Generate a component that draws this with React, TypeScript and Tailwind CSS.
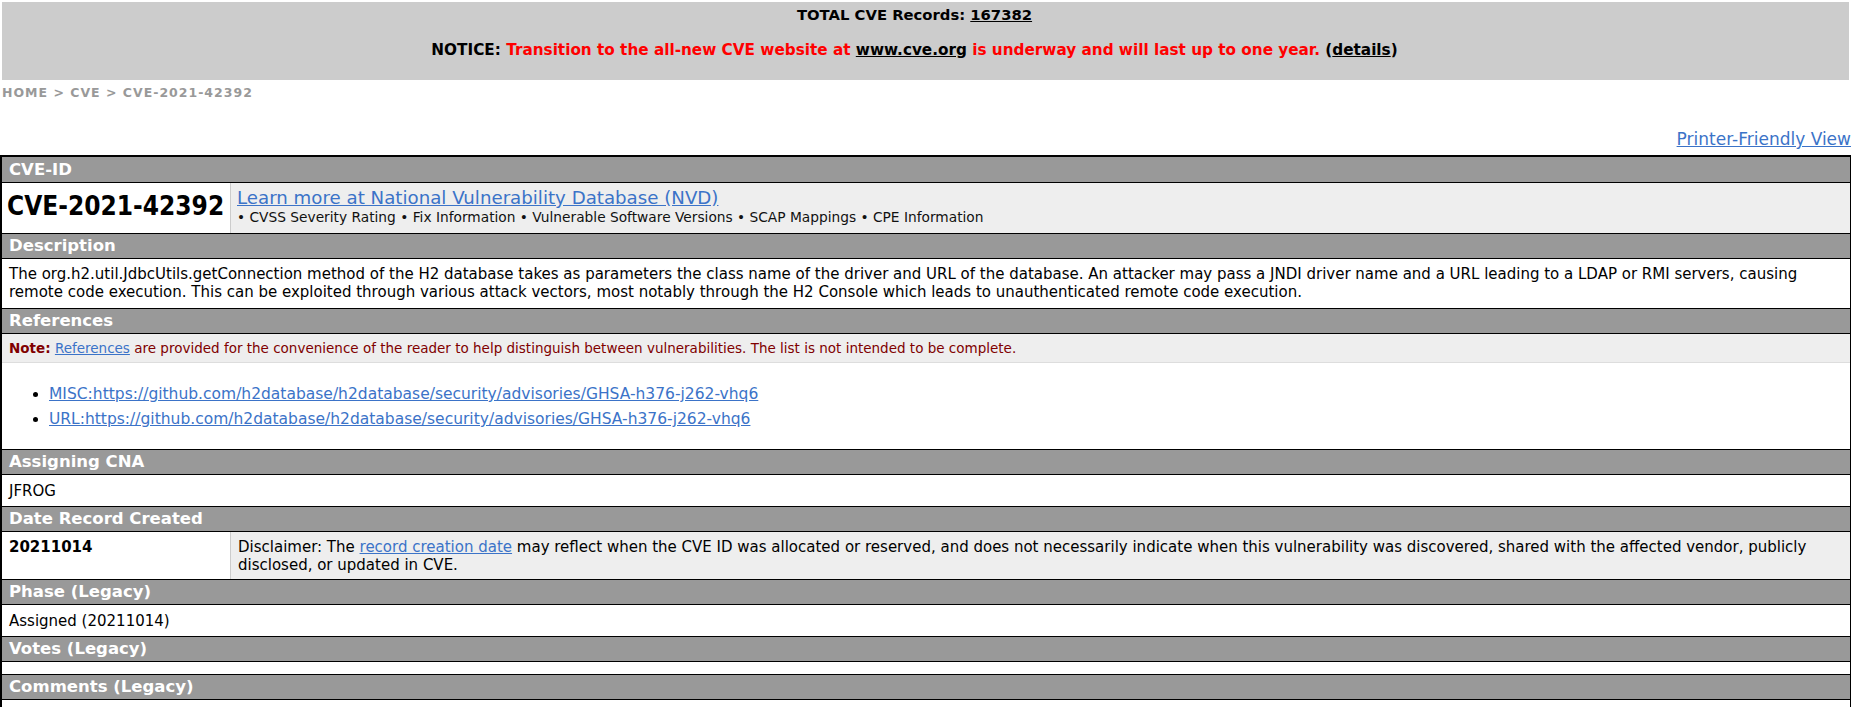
import React from "react";

const F = { fontFamily: '"DejaVu Sans", Verdana, sans-serif' };
const FC = { fontFamily: '"DejaVu Sans Condensed", "DejaVu Sans", sans-serif' };

function Header({ children, first }: { children: React.ReactNode; first?: boolean }) {
  return (
    <div
      className={
        "h-[26px] flex items-center bg-[#999999] px-[7px] text-[16.5px] font-bold text-white border-b border-black " +
        (first ? "" : "border-t")
      }
    >
      {children}
    </div>
  );
}

const linkCls = "text-[#3b73c8] underline";

export default function App() {
  return (
    <div style={F} className="w-[1875px] h-[707px] overflow-hidden bg-white text-black">
      <div className="w-[1851px]">
        {/* Banner */}
        <div className="mx-[2px] mt-[2px] h-[78px] bg-[#cccccc] pr-[22px] flex flex-col items-center text-[15.25px] font-bold leading-[18px]">
          <div className="mt-[4px] text-[14.8px]">
            TOTAL CVE Records: <span className="underline">167382</span>
          </div>
          <div className="mt-[17px]">
            NOTICE: <span className="text-[#ff0000]">Transition to the all-new CVE website at </span>
            <span className="underline">www.cve.org</span>
            <span className="text-[#ff0000]"> is underway and will last up to one year.</span> (
            <span className="underline">details</span>)
          </div>
        </div>

        {/* Breadcrumb */}
        <div className="px-[2px] mt-[5px] text-[12.5px] font-bold tracking-[1px] text-[#999999] leading-[16px]">
          HOME &gt; CVE &gt; CVE-2021-42392
        </div>

        {/* Printer friendly */}
        <div className="flex justify-end mt-[27px] h-[24px]">
          <span className={"text-[17px] leading-[22px] " + linkCls}>Printer-Friendly View</span>
        </div>

        {/* Table */}
        <div className="mt-[3px] border-t-2 border-l-2 border-r border-black text-[15px] leading-[18px]">
          <Header first>CVE-ID</Header>
          <div className="grid grid-cols-[228px_1fr] h-[50px]">
            <div
              style={FC}
              className="bg-white px-[5px] flex items-center pb-[4px] text-[26px] font-bold whitespace-nowrap"
            >
              CVE-2021-42392
            </div>
            <div className="bg-[#eeeeee] border-l border-[#cccccc] px-[6px] pt-[4px]">
              <div className={"text-[18.2px] leading-[22px] " + linkCls}>
                Learn more at National Vulnerability Database (NVD)
              </div>
              <div className="text-[13.75px] leading-[17px] text-[#111]">
                • CVSS Severity Rating • Fix Information • Vulnerable Software Versions • SCAP Mappings • CPE
                Information
              </div>
            </div>
          </div>
          <Header>Description</Header>
          <div className="px-[7px] pt-[6px] pb-[7px]">
            The org.h2.util.JdbcUtils.getConnection method of the H2 database takes as parameters the class name of
            the driver and URL of the database. An attacker may pass a JNDI driver name and a URL leading to a LDAP or
            RMI servers, causing remote code execution. This can be exploited through various attack vectors, most
            notably through the H2 Console which leads to unauthenticated remote code execution.
          </div>
          <Header>References</Header>
          <div className="h-[29px] bg-[#eeeeee] border-b border-[#dddddd] px-[7px] flex items-center text-[13.5px] text-[#800000]">
            <span>
              <b>Note:</b> <span className={linkCls}>References</span> are provided for the convenience of the reader
              to help distinguish between vulnerabilities. The list is not intended to be complete.
            </span>
          </div>
          <div className="h-[86px] pt-[22px]">
            <ul className="list-disc pl-[47px] flex flex-col gap-[7px] text-[15.5px] leading-[18px]">
              <li>
                <span className={linkCls}>
                  MISC:https://github.com/h2database/h2database/security/advisories/GHSA-h376-j262-vhq6
                </span>
              </li>
              <li>
                <span className={linkCls}>
                  URL:https://github.com/h2database/h2database/security/advisories/GHSA-h376-j262-vhq6
                </span>
              </li>
            </ul>
          </div>
          <Header>Assigning CNA</Header>
          <div className="px-[7px] h-[31px] flex items-center">JFROG</div>
          <Header>Date Record Created</Header>
          <div className="grid grid-cols-[228px_1fr] h-[47px]">
            <div className="bg-white px-[7px] pt-[6px] font-bold text-[15px]">20211014</div>
            <div className="bg-[#eeeeee] border-l border-[#cccccc] px-[7px] pt-[6px]">
              Disclaimer: The <span className={linkCls}>record creation date</span> may reflect when the CVE ID was
              allocated or reserved, and does not necessarily indicate when this vulnerability was discovered, shared
              with the affected vendor, publicly disclosed, or updated in CVE.
            </div>
          </div>
          <Header>Phase (Legacy)</Header>
          <div className="px-[7px] h-[31px] flex items-center">Assigned (20211014)</div>
          <Header>Votes (Legacy)</Header>
          <div className="h-[12px]"></div>
          <Header>Comments (Legacy)</Header>
          <div className="h-[40px]"></div>
        </div>
      </div>
    </div>
  );
}
